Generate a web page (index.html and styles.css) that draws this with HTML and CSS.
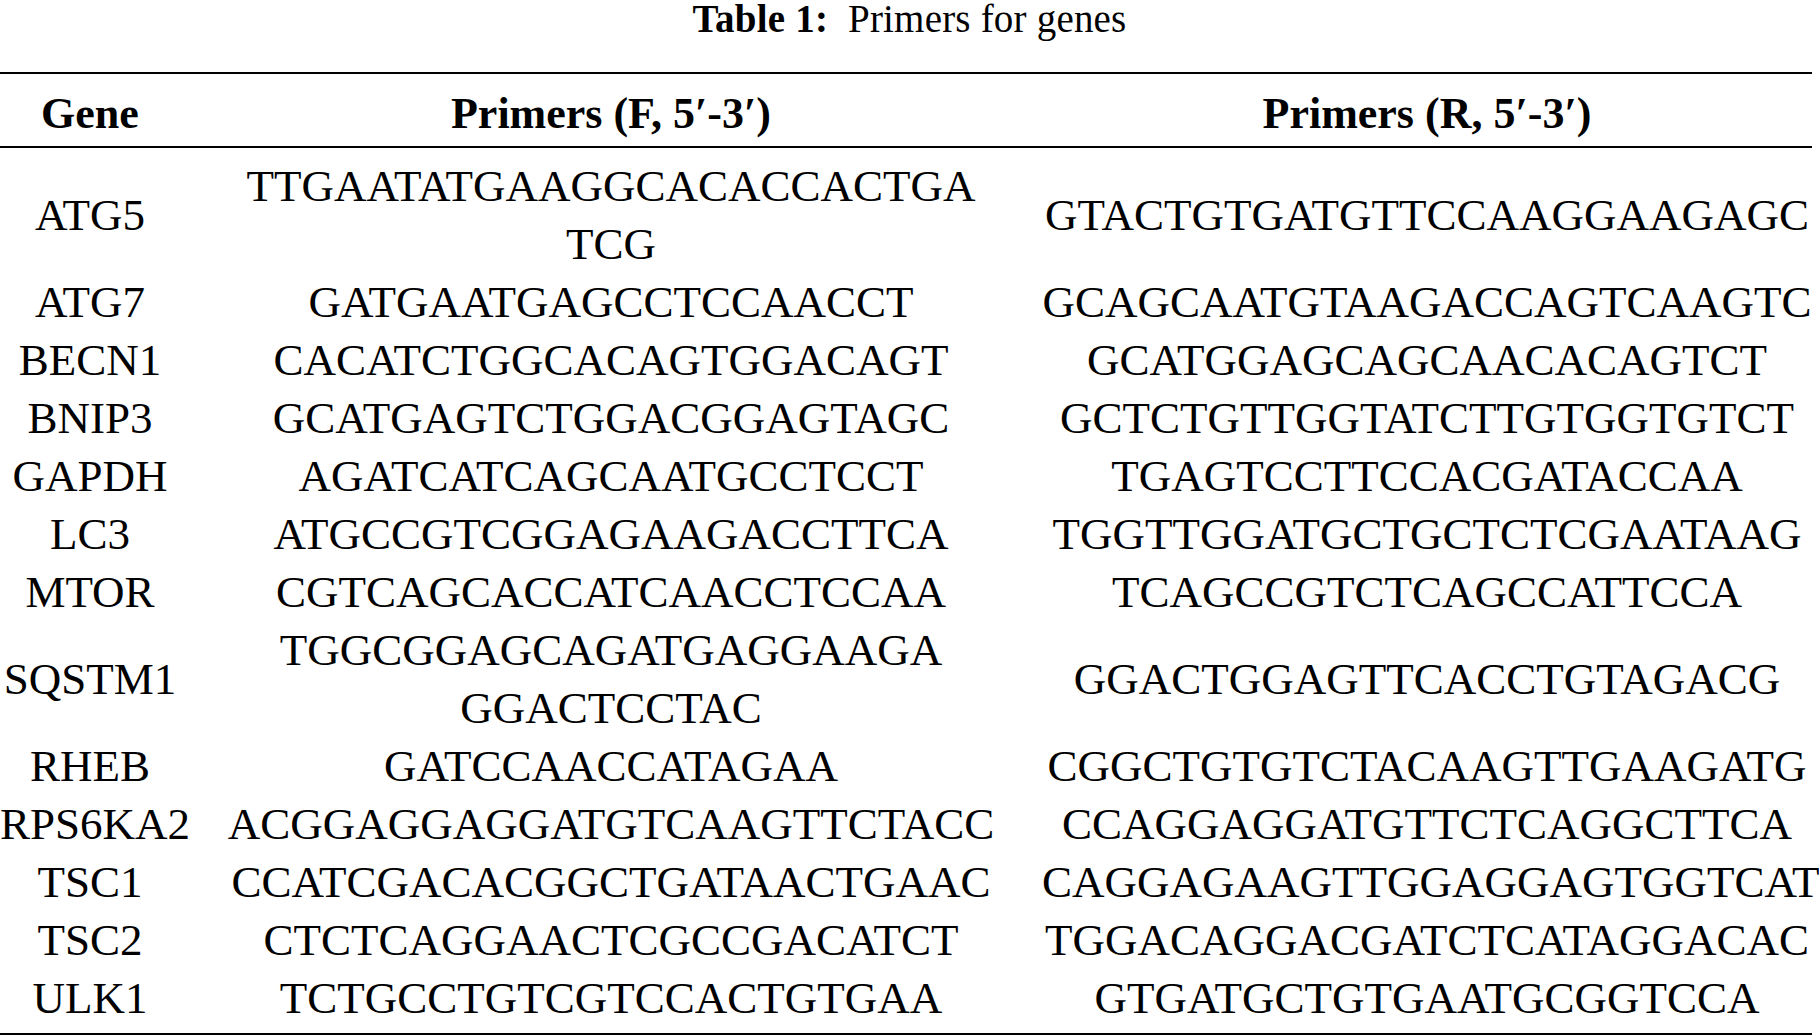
FILE: index.html
```html
<!DOCTYPE html>
<html lang="en">
<head>
<meta charset="utf-8">
<title>Table 1: Primers for genes</title>
<link rel="stylesheet" href="styles.css">
</head>
<body>
<div class="page">
  <div class="caption"><span class="caption-label">Table 1:</span>&nbsp; Primers for genes</div>
  <table class="primers">
    <colgroup>
      <col class="col-gene">
      <col class="col-fwd">
      <col class="col-rev">
    </colgroup>
    <thead>
      <tr>
        <th>Gene</th>
        <th>Primers (F, 5′-3′)</th>
        <th>Primers (R, 5′-3′)</th>
      </tr>
    </thead>
    <tbody>
      <tr><td>ATG5</td><td>TTGAATATGAAGGCACACCACTGA<br>TCG</td><td>GTACTGTGATGTTCCAAGGAAGAGC</td></tr>
      <tr><td>ATG7</td><td>GATGAATGAGCCTCCAACCT</td><td>GCAGCAATGTAAGACCAGTCAAGTC</td></tr>
      <tr><td>BECN1</td><td>CACATCTGGCACAGTGGACAGT</td><td>GCATGGAGCAGCAACACAGTCT</td></tr>
      <tr><td>BNIP3</td><td>GCATGAGTCTGGACGGAGTAGC</td><td>GCTCTGTTGGTATCTTGTGGTGTCT</td></tr>
      <tr><td>GAPDH</td><td>AGATCATCAGCAATGCCTCCT</td><td>TGAGTCCTTCCACGATACCAA</td></tr>
      <tr><td>LC3</td><td>ATGCCGTCGGAGAAGACCTTCA</td><td>TGGTTGGATGCTGCTCTCGAATAAG</td></tr>
      <tr><td>MTOR</td><td>CGTCAGCACCATCAACCTCCAA</td><td>TCAGCCGTCTCAGCCATTCCA</td></tr>
      <tr><td>SQSTM1</td><td>TGGCGGAGCAGATGAGGAAGA<br>GGACTCCTAC</td><td>GGACTGGAGTTCACCTGTAGACG</td></tr>
      <tr><td>RHEB</td><td>GATCCAACCATAGAA</td><td>CGGCTGTGTCTACAAGTTGAAGATG</td></tr>
      <tr><td>RPS6KA2</td><td>ACGGAGGAGGATGTCAAGTTCTACC</td><td>CCAGGAGGATGTTCTCAGGCTTCA</td></tr>
      <tr><td>TSC1</td><td>CCATCGACACGGCTGATAACTGAAC</td><td>CAGGAGAAGTTGGAGGAGTGGTCAT</td></tr>
      <tr><td>TSC2</td><td>CTCTCAGGAACTCGCCGACATCT</td><td>TGGACAGGACGATCTCATAGGACAC</td></tr>
      <tr><td>ULK1</td><td>TCTGCCTGTCGTCCACTGTGAA</td><td>GTGATGCTGTGAATGCGGTCCA</td></tr>
    </tbody>
  </table>
</div>
</body>
</html>
```
FILE: styles.css
```css
html, body {
  margin: 0;
  padding: 0;
  background: #ffffff;
}

body {
  font-family: "Liberation Serif", "Times New Roman", serif;
  color: #000000;
}

.page {
  width: 1819px;
}

.caption {
  text-align: center;
  font-size: 39px;
  line-height: 38px;
  height: 38px;
  margin-bottom: 34px;
  letter-spacing: 0.2px;
}

.caption-label {
  font-weight: bold;
}

.primers {
  width: 1812px;
  table-layout: fixed;
  border-collapse: separate;
  border-spacing: 0;
  border-top: 2px solid #000;
  border-bottom: 2px solid #000;
  font-size: 45px;
  line-height: 58px;
}

.col-gene { width: 180px; }
.col-fwd { width: 862px; }
.col-rev { width: 770px; }

.primers th,
.primers td {
  padding: 0;
  text-align: center;
  vertical-align: middle;
  white-space: nowrap;
}

.primers th {
  font-weight: bold;
  font-size: 44px;
  padding-top: 11px;
  padding-bottom: 3px;
  border-bottom: 2px solid #000;
}

.primers tbody tr:first-child td {
  padding-top: 9px;
}

.primers tbody tr:last-child td {
  padding-bottom: 6px;
}
```
